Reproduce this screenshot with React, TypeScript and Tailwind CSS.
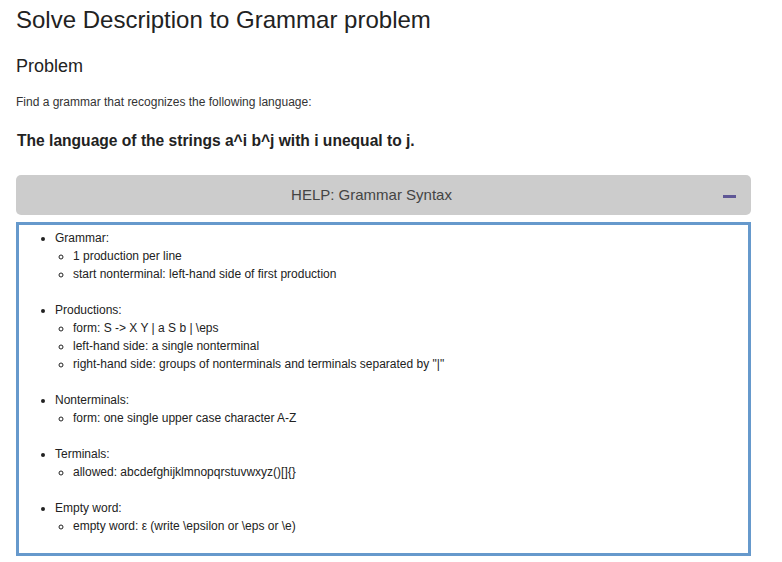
import { Fragment } from "react";

type HelpSection = {
    title: string;
    items: string[];
};

const sections: HelpSection[] = [
    { title: "Grammar:", items: ["1 production per line", "start nonterminal: left-hand side of first production"] },
    {
        title: "Productions:",
        items: [
            "form: S -> X Y | a S b | \\eps",
            "left-hand side: a single nonterminal",
            'right-hand side: groups of nonterminals and terminals separated by "|"',
        ],
    },
    { title: "Nonterminals:", items: ["form: one single upper case character A-Z"] },
    { title: "Terminals:", items: ["allowed: abcdefghijklmnopqrstuvwxyz()[]{}"] },
    { title: "Empty word:", items: ["empty word: ε (write \\epsilon or \\eps or \\e)"] },
];

export default function App() {
    return (
        <div className="min-h-screen bg-white px-[16px] font-['Liberation_Sans',Arial,sans-serif] text-[#222]">
            <h1 className="pt-[6px] text-[24px] leading-[28px] font-normal">Solve Description to Grammar problem</h1>
            <h2 className="mt-[21px] text-[18px] leading-[22px] font-normal">Problem</h2>
            <p className="mt-[17px] text-[12px] leading-[16px] text-[#333]">
                Find a grammar that recognizes the following language:
            </p>
            <p className="mt-[21px] pl-[1px] text-[15.6px] leading-[20px] font-bold">
                The language of the strings a^i b^j with i unequal to j.
            </p>

            <div className="mt-[24px] w-[735px]">
                <div className="relative flex h-[40px] items-center justify-center rounded-[5px] bg-[#cccccc] pr-[24px]">
                    <span className="text-[15px] text-[#444]">HELP: Grammar Syntax</span>
                    <span className="absolute top-[20px] right-[15px] h-[3px] w-[13px] bg-[#5f5796]" aria-hidden />
                </div>

                <div className="mt-[7px] border-[3px] border-[#6699cc] pt-[4px] pl-[36px]">
                    <ul className="list-disc text-[12px] leading-[18px] text-[#222]">
                        {sections.map((s) => (
                            <Fragment key={s.title}>
                                <li>
                                    {s.title}
                                    <ul className="list-[circle] pl-[18px]">
                                        {s.items.map((it) => (
                                            <li key={it}>{it}</li>
                                        ))}
                                    </ul>
                                    <br />
                                </li>
                            </Fragment>
                        ))}
                    </ul>
                </div>
            </div>
        </div>
    );
}
